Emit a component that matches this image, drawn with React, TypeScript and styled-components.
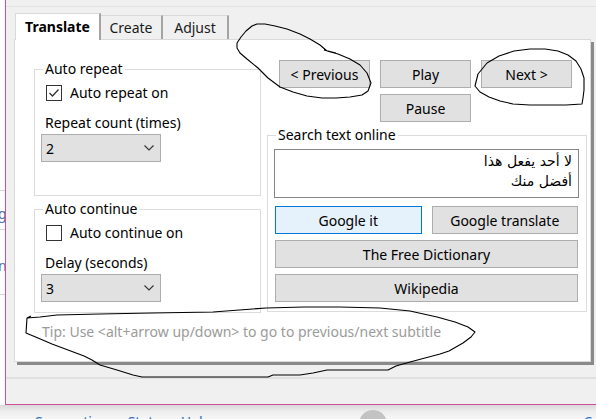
import React from 'react';
import styled, { createGlobalStyle } from 'styled-components';

const GlobalStyle = createGlobalStyle`
  html, body { margin: 0; padding: 0; background: #fff; }
  body {
    font-family: "Noto Sans", "DejaVu Sans", sans-serif;
    font-size: 14px;
    color: #000;
  }
  * { box-sizing: border-box; }
`;

const Screen = styled.div`
  position: relative;
  width: 596px;
  height: 419px;
  overflow: hidden;
  display: grid;
  grid-template-columns: 5px 1fr;
  grid-template-rows: 405px 14px;
  background: #fff;
`;

const Gutter = styled.div`
  overflow: hidden;
  display: flex;
  flex-direction: column;
  padding-top: 190px;
`;

const GhostRule = styled.div<{ $dashed?: boolean; $gap: number }>`
  margin-top: ${p => p.$gap}px;
  height: 0;
  border-top: 1px ${p => (p.$dashed ? 'dashed' : 'solid')} #d6d6d6;
`;

const GhostGlyph = styled.div<{ $gap: number }>`
  margin-top: ${p => p.$gap}px;
  margin-left: -2px;
  height: 18px;
  line-height: 18px;
  font-size: 14px;
  color: #4a74a6;
`;

const Window = styled.div`
  background: #f0f0f0;
  border-left: 1px solid #cf4f98;
  border-bottom: 1px solid #cf4f98;
  display: flex;
  flex-direction: column;
  min-width: 0;
`;

const TopRule = styled.div`
  margin-top: 6px;
  height: 1px;
  background: #e2e2e2;
`;

const TabControl = styled.div`
  margin: 6px 0 0 8px;
  display: flex;
  flex-direction: column;
`;

const TabStrip = styled.div`
  display: flex;
  align-items: flex-end;
  height: 27px;
  padding-left: 1px;
  margin-bottom: -1px;
  position: relative;
  z-index: 1;
`;

const Tab = styled.div<{ $active?: boolean; $w: number }>`
  width: ${p => p.$w}px;
  height: ${p => (p.$active ? 27 : 24)}px;
  margin-bottom: ${p => (p.$active ? 0 : 1)}px;
  display: flex;
  align-items: center;
  justify-content: center;
  padding-bottom: ${p => (p.$active ? 1 : 0)}px;
  background: ${p => (p.$active ? '#fff' : '#f0f0f0')};
  border-top: 1px solid #d9d9d9;
  border-left: ${p => (p.$active ? '1px solid #d9d9d9' : 'none')};
  border-right: 2px solid #a4a4a4;
  font-weight: ${p => (p.$active ? 700 : 400)};
  color: ${p => (p.$active ? '#000' : '#1a1a1a')};
  white-space: nowrap;
`;

const Panel = styled.div`
  width: 577px;
  height: 323px;
  background: #fff;
  border: 1px solid #dadada;
  box-shadow: 3px 3px 0 #8a8a8a;
  display: flex;
  flex-direction: column;
`;

const Body = styled.div`
  display: grid;
  grid-template-columns: 227px 320px;
  column-gap: 6px;
  padding: 20px 3px 0 19px;
  align-items: start;
`;

const Column = styled.div<{ $gap?: number }>`
  display: flex;
  flex-direction: column;
  gap: ${p => p.$gap ?? 0}px;
`;

const Group = styled.fieldset<{ $pb: number }>`
  margin: 0;
  min-width: 0;
  border: 1px solid #dcdcdc;
  padding: 7px 6px ${p => p.$pb}px 6px;
  display: flex;
  flex-direction: column;
`;

const Legend = styled.legend`
  margin-left: 2px;
  padding: 0 2px;
  line-height: 18px;
  height: 18px;
  font-size: 14px;
  color: #000;
`;

const CheckRow = styled.label`
  display: flex;
  align-items: center;
  gap: 8px;
  margin-left: 5px;
  height: 16px;
  line-height: 16px;
  white-space: nowrap;
`;

const Box = styled.span`
  width: 16px;
  height: 16px;
  border: 1px solid #333;
  background: #fff;
  display: flex;
  align-items: center;
  justify-content: center;
  flex: none;
`;

const FieldLabel = styled.div`
  margin: 13px 0 0 4px;
  line-height: 18px;
  height: 18px;
  white-space: nowrap;
`;

const Combo = styled.div`
  margin-top: 2px;
  width: 120px;
  height: 28px;
  border: 1px solid #adadad;
  background: #e1e1e1;
  display: flex;
  align-items: center;
  justify-content: space-between;
  padding: 0 6px 0 4px;
`;

const ButtonGrid = styled.div`
  display: grid;
  grid-template-columns: repeat(3, 91px);
  grid-auto-rows: 28px;
  column-gap: 10px;
  row-gap: 6px;
  padding-left: 12px;
`;

const Button = styled.div<{ $focus?: boolean; $col?: number; $span?: number }>`
  ${p => (p.$col ? `grid-column: ${p.$col};` : '')}
  ${p => (p.$span ? `grid-column: span ${p.$span};` : '')}
  height: 28px;
  display: flex;
  align-items: center;
  justify-content: center;
  background: ${p => (p.$focus ? '#e5f1fb' : '#e1e1e1')};
  border: 1px solid ${p => (p.$focus ? '#0078d7' : '#adadad')};
  color: #000;
  white-space: nowrap;
`;

const SearchGroup = styled(Group)`
  margin-top: 4px;
  padding: 5px 7px 9px 6px;
`;

const TextBox = styled.div`
  height: 49px;
  border: 1px solid #858585;
  background: #fff;
  padding: 1px 6px 0 6px;
  direction: rtl;
  text-align: right;
  font-family: "DejaVu Sans", "Noto Sans", sans-serif;
  font-size: 14px;
  line-height: 20px;
  color: #000;
`;

const SearchButtons = styled.div`
  margin: 8px 1px 0 1px;
  display: grid;
  grid-template-columns: 1fr 1fr;
  grid-auto-rows: 28px;
  column-gap: 10px;
  row-gap: 6px;
`;

const Tip = styled.div`
  margin: 10px 0 0 27px;
  line-height: 18px;
  color: #9b9b9b;
  white-space: nowrap;
`;

const BottomRule = styled.div`
  margin-top: 15px;
  height: 2px;
  background: #e0e0e0;
`;

const BottomStrip = styled.div`
  grid-column: 1 / -1;
  background: linear-gradient(#d9d9d9, #efefef 7px, #f6f6f6);
  display: flex;
  align-items: flex-start;
  padding: 8px 0 0 35px;
  overflow: hidden;
`;

const Link = styled.span<{ $gap?: number }>`
  margin-left: ${p => p.$gap ?? 0}px;
  line-height: 18px;
  color: #1f6fc5;
  white-space: nowrap;
`;

const Avatar = styled.span`
  margin: -3px 0 0 148px;
  width: 28px;
  height: 28px;
  border-radius: 50%;
  background: #c3c3c3;
  flex: none;
`;

const Overlay = styled.svg`
  position: absolute;
  inset: 0;
  width: 596px;
  height: 419px;
  pointer-events: none;
`;

const Chevron = () => (
  <svg width="10" height="6" viewBox="0 0 10 6">
    <polyline points="0.5,0.5 5,5 9.5,0.5" fill="none" stroke="#333" strokeWidth="1.1" />
  </svg>
);

const Check = () => (
  <svg width="12" height="12" viewBox="0 0 12 12">
    <polyline points="1.5,6 4.5,9 10.5,2.5" fill="none" stroke="#333" strokeWidth="1.3" />
  </svg>
);

const prevLoop =
  'M237,43 L241,37 L246,31 L252,26 L257,24 L265,24 L275,26 L287,29 L300,34 L310,39 L320,45 L327,51 L338,54 L350,59 L360,65 L367,73 L371,83 L368,91 L362,95 L350,97 L336,98 L322,98 L307,96 L293,92 L280,87 L268,78 L258,68 L247,59 L240,53 L237,48 Z M324,50 L336,53';
const nextLoop =
  'M475,86 L478,74 L487,63 L499,56 L514,51 L530,49 L545,49 L558,51 L568,55 L576,61 L581,69 L584,78 L584,90 L583,98 L582,104 L566,105 L548,105 L530,105 L513,104 L500,101 L489,97 L480,92 Z';
const tipLoop =
  'M27,318 L26,333 L38,338 L52,344 L68,350 L84,356 L92,360 L100,365 L117,370 L133,375 L142,377 L205,377 L268,377 L273,375 L300,375 L313,373 L327,370 L360,370 L388,370 L396,366 L410,362 L425,358 L440,354 L449,351 L463,343 L471,337 L475,332 L468,327 L455,322 L437,317 L410,311 L380,308 L340,307 L304,307 L266,308 L213,312 L152,313 L100,314 L57,315 L40,317 L27,318 L31,316';

export default function App() {
  return (
    <>
      <GlobalStyle />
      <Screen>
        <Gutter>
          <GhostRule $dashed $gap={0} />
          <GhostGlyph $gap={14}>g</GhostGlyph>
          <GhostRule $gap={6} />
          <GhostGlyph $gap={27}>n</GhostGlyph>
          <GhostRule $gap={19} />
        </Gutter>
        <Window>
          <TopRule />
          <TabControl>
            <TabStrip>
              <Tab $active $w={86}>Translate</Tab>
              <Tab $w={62}>Create</Tab>
              <Tab $w={66}>Adjust</Tab>
            </TabStrip>
            <Panel>
              <Body>
                <Column $gap={4}>
                  <Group $pb={33}>
                    <Legend>Auto repeat</Legend>
                    <CheckRow>
                      <Box>
                        <Check />
                      </Box>
                      Auto repeat on
                    </CheckRow>
                    <FieldLabel>Repeat count (times)</FieldLabel>
                    <Combo>
                      <span>2</span>
                      <Chevron />
                    </Combo>
                  </Group>
                  <Group $pb={10}>
                    <Legend>Auto continue</Legend>
                    <CheckRow>
                      <Box />
                      Auto continue on
                    </CheckRow>
                    <FieldLabel>Delay (seconds)</FieldLabel>
                    <Combo>
                      <span>3</span>
                      <Chevron />
                    </Combo>
                  </Group>
                </Column>
                <Column>
                  <ButtonGrid>
                    <Button>&lt; Previous</Button>
                    <Button>Play</Button>
                    <Button>Next &gt;</Button>
                    <Button $col={2}>Pause</Button>
                  </ButtonGrid>
                  <SearchGroup $pb={9}>
                    <Legend>Search text online</Legend>
                    <TextBox>
                      <div>لا أحد يفعل هذا</div>
                      <div>أفضل منك</div>
                    </TextBox>
                    <SearchButtons>
                      <Button $focus>Google it</Button>
                      <Button>Google translate</Button>
                      <Button $span={2}>The Free Dictionary</Button>
                      <Button $span={2}>Wikipedia</Button>
                    </SearchButtons>
                  </SearchGroup>
                </Column>
              </Body>
              <Tip>Tip: Use &lt;alt+arrow up/down&gt; to go to previous/next subtitle</Tip>
            </Panel>
          </TabControl>
          <BottomRule />
        </Window>
        <BottomStrip>
          <Link>Suggestions</Link>
          <Link $gap={12}>Status</Link>
          <Link $gap={12}>Help</Link>
          <Avatar />
          <Link $gap={196}>C</Link>
        </BottomStrip>
        <Overlay viewBox="0 0 596 419">
          <g fill="none" stroke="#000" strokeWidth="1.1" strokeLinejoin="round">
            <path d={prevLoop} />
            <path d={nextLoop} />
            <path d={tipLoop} />
          </g>
        </Overlay>
      </Screen>
    </>
  );
}
